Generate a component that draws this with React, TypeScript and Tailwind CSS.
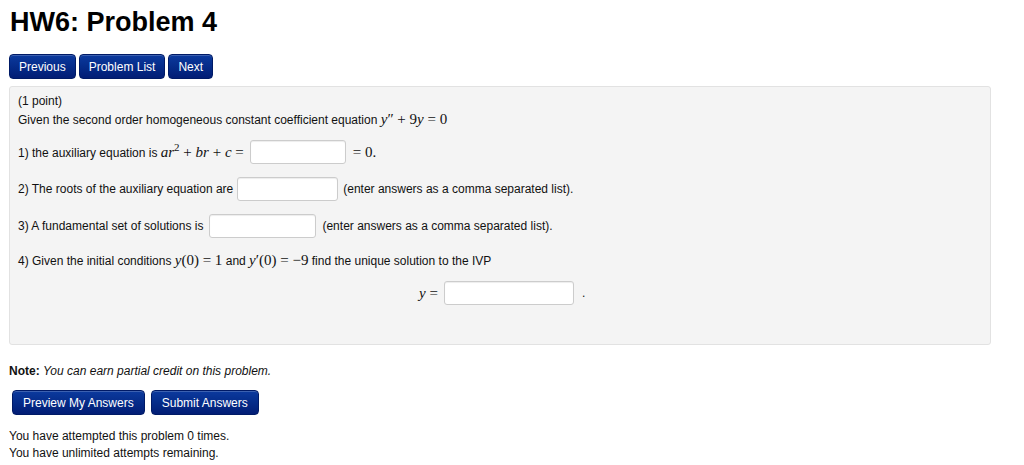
import React from 'react';

const btn =
  'h-[25px] px-[9px] rounded-[4px] border border-[#001a66] bg-gradient-to-b from-[#0c3a9e] to-[#021d75] text-white text-[12px] leading-none shadow-[inset_0_1px_0_rgba(255,255,255,0.2)]';

function Input({ w }: { w: number }) {
  return (
    <span
      className="inline-block h-[24px] bg-white border border-[#cccccc] rounded-[3px] align-middle shadow-[inset_0_1px_1px_rgba(0,0,0,0.075)]"
      style={{ width: w }}
    />
  );
}

const M = ({ children }: { children: React.ReactNode }) => (
  <span className="font-['Liberation_Serif',serif] text-[15px]">{children}</span>
);
const V = ({ children }: { children: React.ReactNode }) => (
  <i className="font-['Liberation_Serif',serif] text-[15px]">{children}</i>
);

export default function App() {
  return (
    <div className="w-[1024px] h-[465px] bg-white text-[#111] font-['Liberation_Sans',Arial,sans-serif] text-[12px] overflow-hidden">
      <h1 className="pl-[10px] pt-[5px] text-[27px] font-bold leading-[34px] text-black">
        HW6: Problem 4
      </h1>

      <div className="flex gap-[3px] pl-[9px] mt-[15px]">
        <button className={btn}>Previous</button>
        <button className={btn}>Problem List</button>
        <button className={btn}>Next</button>
      </div>

      <div className="ml-[9px] w-[982px] h-[259px] mt-[7px] bg-[#f4f4f4] border border-[#e2e2e2] rounded-[3px] pl-[8px] pt-[5px] leading-[18px]">
        <div>(1 point)</div>
        <div>
          Given the second order homogeneous constant coefficient equation{' '}
          <V>y</V>
          <M>″ + 9</M>
          <V>y</V>
          <M> = 0</M>
        </div>

        <div className="mt-[11px] flex items-center h-[24px]">
          <span>
            1) the auxiliary equation is <V>ar</V>
            <sup className="font-['Liberation_Serif',serif] text-[11px]">2</sup>
            <M> + </M>
            <V>br</V>
            <M> + </M>
            <V>c</V>
            <M> =</M>
          </span>
          <span className="ml-[6px]">
            <Input w={96} />
          </span>
          <span className="ml-[7px]">
            <M>= 0.</M>
          </span>
        </div>

        <div className="mt-[13px] flex items-center h-[24px]">
          <span>2) The roots of the auxiliary equation are</span>
          <span className="ml-[4px]">
            <Input w={101} />
          </span>
          <span className="ml-[5px]">(enter answers as a comma separated list).</span>
        </div>

        <div className="mt-[13px] flex items-center h-[24px]">
          <span>3) A fundamental set of solutions is</span>
          <span className="ml-[6px]">
            <Input w={107} />
          </span>
          <span className="ml-[6px]">(enter answers as a comma separated list).</span>
        </div>

        <div className="mt-[13px] leading-[18px]">
          4) Given the initial conditions <V>y</V>
          <M>(0) = 1</M> and <V>y</V>
          <M>′(0) = −9</M> find the unique solution to the IVP
        </div>

        <div className="mt-[11px] flex items-center h-[24px] pl-[401px]">
          <V>y</V>
          <M>&nbsp;=</M>
          <span className="ml-[6px]">
            <Input w={130} />
          </span>
          <span className="ml-[8px]">.</span>
        </div>
      </div>

      <div className="pl-[9px] mt-[17px] leading-[18px]">
        <b>Note:</b> <i>You can earn partial credit on this problem.</i>
      </div>

      <div className="flex gap-[6px] pl-[12px] mt-[10px]">
        <button className={btn + ' px-[10px]'}>Preview My Answers</button>
        <button className={btn + ' px-[10px]'}>Submit Answers</button>
      </div>

      <div className="pl-[9px] mt-[13px] leading-[17px]">
        <div>You have attempted this problem 0 times.</div>
        <div>You have unlimited attempts remaining.</div>
      </div>
    </div>
  );
}
